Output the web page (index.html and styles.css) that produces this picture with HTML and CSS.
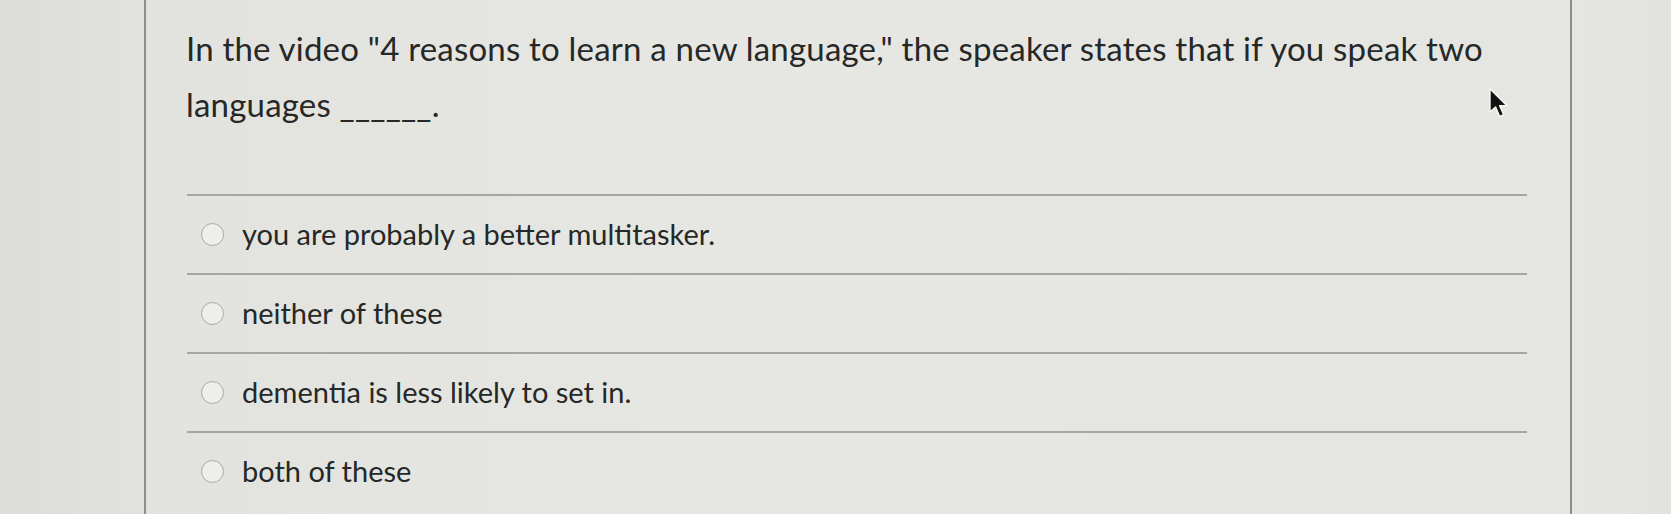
FILE: index.html
```html
<!DOCTYPE html>
<html>
<head>
<meta charset="utf-8">
<link rel="stylesheet" href="styles.css">
</head>
<body>
<div class="page">
  <div class="card">
    <div class="content">
      <p class="question">In the video "4 reasons to learn a new language," the speaker states that if you speak two languages ______.</p>
      <ul class="options">
        <li class="option"><span class="radio"></span><span class="label">you are probably a better multitasker.</span></li>
        <li class="option"><span class="radio"></span><span class="label">neither of these</span></li>
        <li class="option"><span class="radio"></span><span class="label">dementia is less likely to set in.</span></li>
        <li class="option"><span class="radio"></span><span class="label">both of these</span></li>
      </ul>
    </div>
  </div>
  <svg class="cursor" width="22" height="32" viewBox="0 0 20 30">
    <path d="M1.5 1.5 L1.5 23.5 L6.8 18.8 L10.6 27.6 L14.4 26 L10.6 17.6 L17.5 17.6 Z" fill="#121212" stroke="#f7f7f5" stroke-width="1.4" stroke-linejoin="round"/>
  </svg>
</div>
</body>
</html>
```

FILE: styles.css
```css
html, body {
  margin: 0;
  padding: 0;
}
body {
  background: #e3e4e0;
  width: 1671px;
  height: 514px;
  overflow: hidden;
  font-family: Lato, "Open Sans", sans-serif;
  color: #262827;
}
.page {
  position: relative;
  width: 1671px;
  height: 514px;
  background: linear-gradient(90deg, #dcddd9 0px, #e2e3df 145px, #e6e7e3 700px, #e5e6e2 1570px, #e2e3df 1671px);
}
.card {
  margin-left: 144px;
  width: 1424px;
  height: 514px;
  border-left: 2px solid #8e8f8c;
  border-right: 2px solid #8e8f8c;
}
.content {
  margin-left: 41px;
  width: 1340px;
  padding-top: 20px;
}
.question {
  margin: 0 0 0 -1px;
  font-size: 33px;
  letter-spacing: 0.2px;
  line-height: 56px;
  width: 1320px;
}
.options {
  list-style: none;
  margin: 62px 0 0 0;
  padding: 0;
}
.option {
  display: flex;
  align-items: center;
  height: 77px;
  border-top: 2px solid #a5a6a2;
  font-size: 29px;
}
.radio {
  width: 21px;
  height: 21px;
  border-radius: 50%;
  border: 1.5px solid #a8a9a6;
  background: #eeefeb;
  margin-left: 14px;
  margin-right: 18px;
  flex: none;
}
.label {
  position: relative;
  top: -1px;
}
.cursor {
  position: absolute;
  left: 1488px;
  top: 87px;
}
```
